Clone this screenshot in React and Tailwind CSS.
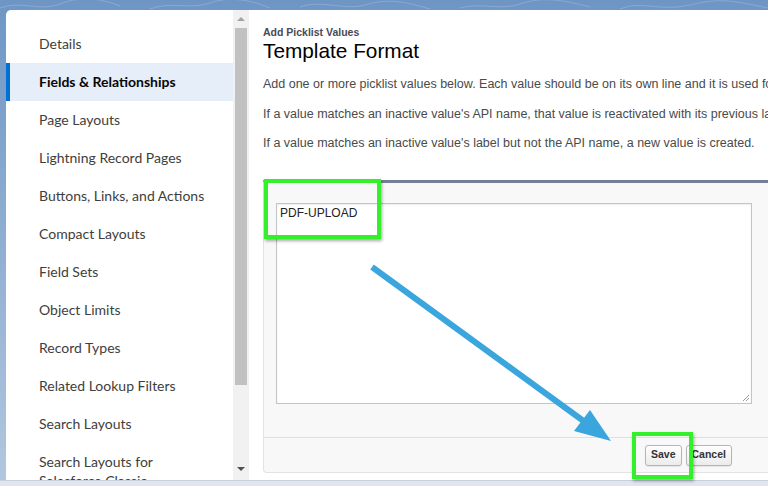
const navItems = [
  'Details',
  'Fields & Relationships',
  'Page Layouts',
  'Lightning Record Pages',
  'Buttons, Links, and Actions',
  'Compact Layouts',
  'Field Sets',
  'Object Limits',
  'Record Types',
  'Related Lookup Filters',
  'Search Layouts',
  'Search Layouts for Salesforce Classic',
]

const NavItem = ({ label, active }) => {
  return (
    <li
      className={
        active
          ? 'border-l-4 border-[#0070d2] bg-[#e5eef9] pl-[29px] pr-[24px] py-[9.5px] leading-[19px] font-bold text-[#080707]'
          : 'border-l-4 border-transparent pl-[29px] pr-[24px] py-[9.5px] leading-[19px] text-[#3e3e3c]'
      }
    >
      {label}
    </li>
  )
}

const Scrollbar = () => {
  return (
    <div className="w-[16px] bg-[#f1f1f1] flex flex-col items-center">
      <div className="h-[18px] flex items-center justify-center">
        <div className="w-0 h-0 border-l-[4px] border-r-[4px] border-b-[4px] border-l-transparent border-r-transparent border-b-[#a3a3a3]" />
      </div>
      <div className="w-[12px] h-[357px] bg-[#c1c1c1]" />
      <div className="flex-1" />
      <div className="h-[22px] flex items-center justify-center">
        <div className="w-0 h-0 border-l-[4px] border-r-[4px] border-t-[4px] border-l-transparent border-r-transparent border-t-[#505050]" />
      </div>
    </div>
  )
}

const Button = ({ children }) => {
  return (
    <button className="h-[21px] px-[5px] rounded-[3px] border border-[#b5b5b5] bg-gradient-to-b from-white to-[#ececec] text-[10.5px] font-bold text-[#333] shadow-[0_1px_1px_rgba(0,0,0,0.08)]">
      {children}
    </button>
  )
}

export default function App() {
  return (
    <div className="relative w-[768px] h-[486px] overflow-hidden flex flex-col bg-gradient-to-b from-[#6e96c5] to-[#b3c7df] font-['Liberation_Sans',Arial,sans-serif]">
      {/* header strip pattern */}
      <svg className="absolute left-0 top-0" width="768" height="10" viewBox="0 0 768 10">
        <g fill="none" stroke="rgba(255,255,255,0.18)" strokeWidth="1">
          <path d="M0 8 C20 0 40 12 60 4 S100 -2 120 6" />
          <path d="M150 9 C170 1 190 10 210 3 S250 0 270 8" />
          <path d="M300 7 C320 -1 345 11 365 5 S400 0 430 9" />
          <path d="M460 8 C480 2 500 11 520 4 S560 -1 590 7" />
          <path d="M620 9 C640 0 660 12 690 5 S730 0 768 8" />
        </g>
      </svg>
      <div className="h-[10px] shrink-0" />
      <div className="flex h-[470px] pl-[6px]">
        <div className="flex flex-1 bg-white rounded-tl-[5px] overflow-hidden">
          {/* sidebar */}
          <div className="w-[227px] shrink-0 overflow-hidden pt-[14.5px] font-['Lato',sans-serif] text-[14px]">
            <ul>
              {navItems.map((label, i) => (
                <NavItem key={label} label={label} active={i === 1} />
              ))}
            </ul>
          </div>
          <Scrollbar />
          {/* content */}
          <div className="flex-1 min-w-0 overflow-hidden pl-[14px] pt-[16px]">
            <div className="text-[10.5px] leading-[13px] font-bold text-[#4a4a56]">Add Picklist Values</div>
            <h1 className="text-[20.8px] leading-[24px] text-black">Template Format</h1>
            <div className="mt-[14px] text-[12.5px] leading-[15px] text-[#4a4a4a] whitespace-nowrap">
              <p>Add one or more picklist values below. Each value should be on its own line and it is used for</p>
              <p className="mt-[15px]">If a value matches an inactive value's API name, that value is reactivated with its previous label.</p>
              <p className="mt-[14px]">If a value matches an inactive value's label but not the API name, a new value is created.</p>
            </div>
            <div className="mt-[29px] w-[540px] border-t-[3px] border-[#747e96] border-l border-b border-l-[#e3e3e3] border-b-[#e3e3e3] rounded-bl-[4px] bg-[#f8f8f8]">
              <div className="pt-[20px] pl-[12px] pb-[33px]">
                <div className="relative w-[476px] h-[201px] bg-white border border-[#c4c4c4] shadow-[inset_0_1px_2px_rgba(0,0,0,0.08)] pl-[3px] pt-[2px] text-[12px] leading-[15px] text-[#222]">
                  PDF-UPLOAD
                  <svg className="absolute right-[1px] bottom-[1px]" width="9" height="9" viewBox="0 0 9 9">
                    <g stroke="#999" strokeWidth="1">
                      <line x1="8" y1="2" x2="2" y2="8" />
                      <line x1="8" y1="5" x2="5" y2="8" />
                    </g>
                  </svg>
                </div>
              </div>
              <div className="h-[35px] border-t border-[#e0e0e0] flex items-center gap-[4px] pl-[381px]">
                <Button>Save</Button>
                <Button>Cancel</Button>
              </div>
            </div>
          </div>
        </div>
      </div>
      <div className="flex-1 bg-[#e1e6ee] border-t border-[#c7d0dc]" />

      {/* annotations */}
      <div className="absolute left-[264px] top-[179px] w-[117px] h-[60px] border-4 border-[#33f02a] shadow-[1px_2px_3px_rgba(0,0,0,0.35)]" />
      <div className="absolute left-[632px] top-[432px] w-[61px] h-[47px] border-4 border-[#33f02a] shadow-[1px_2px_3px_rgba(0,0,0,0.35)]" />
      <svg className="absolute left-0 top-0 pointer-events-none" width="768" height="486" viewBox="0 0 768 486">
        <line x1="372" y1="267" x2="589" y2="425" stroke="#3aa6dd" strokeWidth="6" />
        <polygon points="611,441 574,431 590,410" fill="#3aa6dd" />
      </svg>
    </div>
  )
}
